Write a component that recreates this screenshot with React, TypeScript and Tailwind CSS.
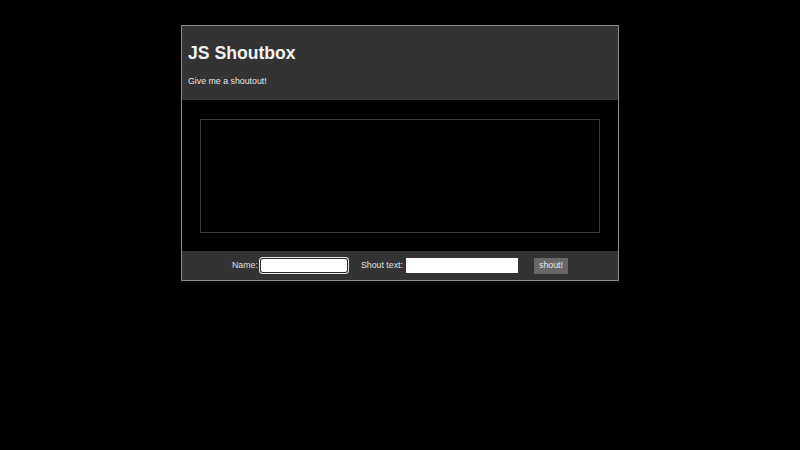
export default function App() {
  return (
    <main
      className="min-h-[450px] bg-black pt-[25px]"
      style={{ fontFamily: '"Liberation Sans", Arial, sans-serif' }}
    >
      <div className="mx-auto w-[438px] border border-[#8a8a8a]">
        <header className="bg-[#333333] px-[6px] pt-[17px] pb-[14px] text-[#f2f2f2]">
          <h1 className="text-[17.6px] font-bold leading-[20px]">JS Shoutbox</h1>
          <p className="mt-[13px] text-[8.8px] leading-[10px] text-[#e6e6e6]">Give me a shoutout!</p>
        </header>

        <section className="bg-black px-[18px] pt-[19px] pb-[18px]">
          <div className="h-[114px] border border-[#3a3a3a]" />
        </section>

        <footer className="flex h-[29px] items-center justify-center bg-[#333333] text-[8.8px] text-[#e0e0e0]">
          <label className="flex items-center">
            Name:
            <input
              autoFocus
              className="ml-[3px] h-[13px] w-[86px] rounded-[2px] bg-white text-black shadow-[0_0_0_1px_#2a2a2a,0_0_0_2px_#e8e8e8] outline-none"
            />
          </label>
          <label className="ml-[14px] flex items-center">
            Shout text:
            <input className="ml-[3px] h-[15px] w-[112px] bg-white text-black outline-none" />
          </label>
          <button className="ml-[16px] h-[16px] w-[34px] bg-[#686868] text-[8.8px] text-[#e6e6e6]">
            shout!
          </button>
        </footer>
      </div>
    </main>
  )
}
